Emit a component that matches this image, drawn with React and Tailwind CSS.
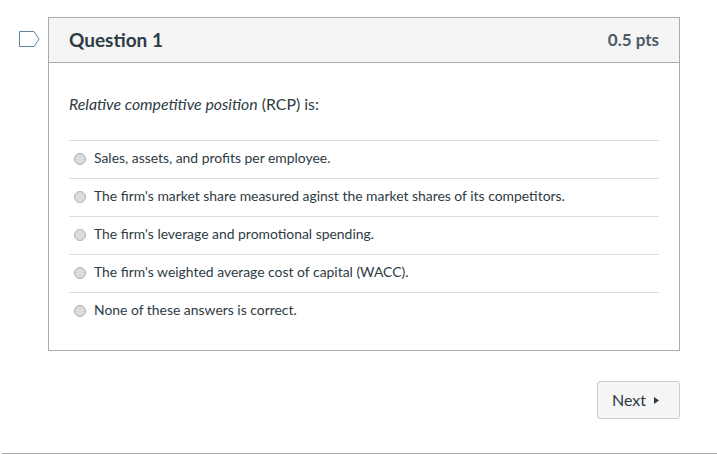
const answers = [
  'Sales, assets, and profits per employee.',
  "The firm's market share measured aginst the market shares of its competitors.",
  "The firm's leverage and promotional spending.",
  "The firm's weighted average cost of capital (WACC).",
  'None of these answers is correct.',
]

const App = () => {
  return (
    <div className="h-[454px] w-[717px] overflow-hidden bg-white font-['Lato',sans-serif] text-[#2d3b45]">
      <div className="flex pt-[17px]">
        <div className="w-[48px] pl-[19px] pt-[14px]">
          <svg width="21" height="17" viewBox="0 0 21 17" fill="none">
            <path d="M0.5 0.5H15L20 8L15 15.5H0.5Z" stroke="#5b83a0" strokeWidth="1" />
          </svg>
        </div>
        <div className="w-[632px] border border-[#aaaaaa]">
          <div className="flex h-[45px] items-center justify-between border-b border-[#aaaaaa] bg-[#f5f5f5] px-5">
            <span className="text-[19px] font-bold">Question 1</span>
            <span className="text-[17px] font-bold text-[#4b5a66]">0.5 pts</span>
          </div>
          <div className="px-5 pb-5">
            <p className="h-[77px] pt-[31px] text-[15.87px] leading-[20px]">
              <em>Relative competitive position</em> (RCP) is:
            </p>
            {answers.map((answer) => (
              <label key={answer} className="flex h-[38px] items-center border-t border-[#dddddd] pb-[3px] pl-[5px] text-[13.91px]">
                <span className="mt-[2px] mr-[8px] h-[12px] w-[12px] rounded-full border border-[#b0b0b0] bg-[#dcdcdc]" />
                {answer}
              </label>
            ))}
          </div>
        </div>
      </div>
      <div className="mt-[30px] flex justify-end pr-[37px]">
        <button className="flex h-[38px] w-[83px] items-center gap-[8px] rounded-[3px] border border-[#c7cdd1] bg-[#f5f5f5] pl-[14px] text-base">
          Next
          <svg width="5" height="7" viewBox="0 0 5 7">
            <path d="M0 0L5 3.5L0 7Z" fill="#2d3b45" />
          </svg>
        </button>
      </div>
      <div className="mt-[34px] ml-[2px] border-t border-[#aaaaaa]" />
    </div>
  )
}

export default App
